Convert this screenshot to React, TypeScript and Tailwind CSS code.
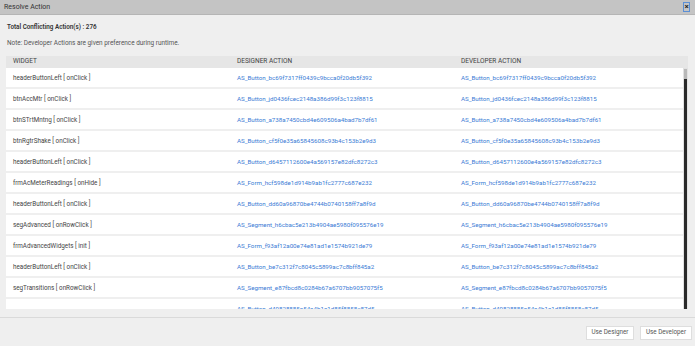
const rows: [string, string][] = [
  ["headerButtonLeft [ onClick ]", "AS_Button_bc69f7317ff0439c9bcca0f20db5f392"],
  ["btnAccMtr [ onClick ]", "AS_Button_jd0436fcec2148a386d99f3c123f8815"],
  ["btnSTrtMntng [ onClick ]", "AS_Button_a738a7450cbd4e609506a4bad7b7df61"],
  ["btnRgtrShake [ onClick ]", "AS_Button_cf5f0e35a65845608c93b4c153b2e9d3"],
  ["headerButtonLeft [ onClick ]", "AS_Button_d6457112600e4a569157e82dfc8272c3"],
  ["frmAcMeterReadings [ onHide ]", "AS_Form_hcf598de1d914b9ab1fc2777c687e232"],
  ["headerButtonLeft [ onClick ]", "AS_Button_dd60a96870be4744b0740158ff7a8f9d"],
  ["segAdvanced [ onRowClick ]", "AS_Segment_h6cbac5e213b4904ae5980f095576e19"],
  ["frmAdvancedWidgets [ init ]", "AS_Form_f93af12a00e74e81ad1e1574b921de79"],
  ["headerButtonLeft [ onClick ]", "AS_Button_be7c312f7c8045c5899ac7c8bff845a2"],
  ["segTransitions [ onRowClick ]", "AS_Segment_e87fbcd8c0284b67a6707bb9057075f5"],
  ["", "AS_Button_d49828885a54a4b1a1d85f8858c87d5"],
];

export default function App() {
  return (
    <div className="flex h-[346px] w-full flex-col overflow-hidden bg-[#efefef] font-['Roboto',sans-serif]">
      <div className="flex h-[15px] items-center justify-between border-b border-[#b5b5b5] bg-[#c4c4c4] pl-[4px] pr-[5px]">
        <span className="text-[7px] text-[#333]">Resolve Action</span>
        <button className="flex h-[10px] w-[7px] items-center justify-center border border-[#5b8fd6] text-[8px] leading-none font-bold text-[#222]">
          ×
        </button>
      </div>

      <div className="px-[7px] pt-[8px]">
        <div className="h-[8px] text-[6.3px] leading-[8px] font-semibold text-[#333]">
          Total Conflicting Action(s) : 276
        </div>
        <div className="mt-[8px] h-[8px] text-[6.4px] leading-[8px] text-[#555]">
          Note: Developer Actions are given preference during runtime.
        </div>
      </div>

      <div className="mt-[9px] mr-[7px] ml-[6px]">
        <div className="flex h-[12px] items-center bg-[#e6e6e6] text-[6.5px] text-[#444]">
          <div className="w-[224px] pl-[7px]">WIDGET</div>
          <div className="w-[224px] pl-[7px]">DESIGNER ACTION</div>
          <div className="flex-1 pl-[7px]">DEVELOPER ACTION</div>
        </div>
        <div className="flex h-[241px]">
          <div className="flex-1 overflow-hidden bg-white">
            {rows.map(([widget, action], i) => (
              <div
                key={i}
                className="flex h-[21px] items-center border-b-2 border-[#efefef] pt-[2px]"
              >
                <div className="w-[224px] pl-[7px] text-[6.3px] text-[#444]">{widget}</div>
                <div className="w-[224px] pl-[7px] text-[6.2px] text-[#3a7bd5]">{action}</div>
                <div className="flex-1 pl-[7px] text-[6.2px] text-[#3a7bd5]">{action}</div>
              </div>
            ))}
          </div>
          <div className="flex w-[5px] flex-col items-center bg-[#e2e2e2]">
            <div className="mt-[1px] h-[10px] w-[3px] bg-[#b9b9b9]" />
            <div className="h-[230px] w-[3px] bg-[#2a2a2a]" />
          </div>
        </div>
      </div>

      <div className="mt-[8px] border-t border-[#dadada]" />

      <div className="mt-[8px] flex justify-end gap-[6px] pr-[3px]">
        <button className="h-[14px] w-[48px] border border-[#dedede] bg-white text-[6.3px] text-[#555]">
          Use Designer
        </button>
        <button className="h-[14px] w-[52px] border border-[#dedede] bg-white text-[6.3px] text-[#555]">
          Use Developer
        </button>
      </div>
    </div>
  );
}
